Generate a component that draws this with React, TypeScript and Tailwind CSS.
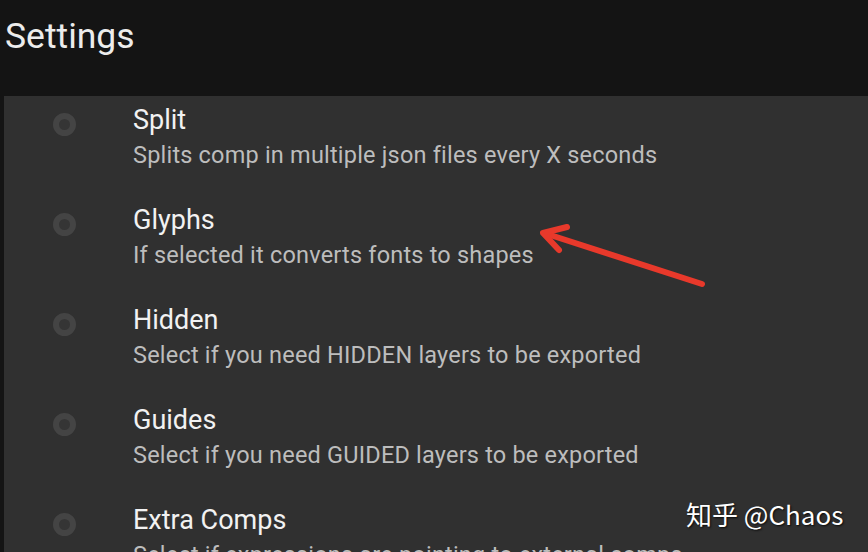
import React from 'react';

type Option = { title: string; description: string };

const options: Option[] = [
  { title: 'Split', description: 'Splits comp in multiple json files every X seconds' },
  { title: 'Glyphs', description: 'If selected it converts fonts to shapes' },
  { title: 'Hidden', description: 'Select if you need HIDDEN layers to be exported' },
  { title: 'Guides', description: 'Select if you need GUIDED layers to be exported' },
  { title: 'Extra Comps', description: 'Select if expressions are pointing to external comps' },
];

const Radio: React.FC = () => (
  <div className="w-[23px] h-[23px] rounded-full border-[6px] border-[#444444] bg-[#353535]" />
);

export default function App() {
  return (
    <div
      className="relative w-[868px] h-[552px] overflow-hidden bg-[#141414] text-white"
      style={{ fontFamily: 'Roboto, "Noto Sans CJK SC", sans-serif' }}
    >
      {/* Header */}
      <div className="h-[96px] pl-[5px] pt-[13px]">
        <h1 className="text-[35.5px] leading-[46px] text-[#ececec]">Settings</h1>
      </div>

      {/* Options panel */}
      <div className="ml-[4px] h-[456px] bg-[#303030]">
        {options.map((o) => (
          <div key={o.title} className="flex h-[100px]">
            <div className="w-[129px] pl-[49px] pt-[17px]">
              <Radio />
            </div>
            <div className="pt-[6px]">
              <div className="text-[27px] leading-[36px] text-[#f2f2f2]">{o.title}</div>
              <div className="text-[23.5px] leading-[34px] text-[#bdbdbd] tracking-[0.2px]">{o.description}</div>
            </div>
          </div>
        ))}
      </div>

      {/* Red annotation arrow */}
      <svg className="absolute left-0 top-0" width="868" height="552" viewBox="0 0 868 552">
        <g stroke="#e8392b" strokeWidth="6" strokeLinecap="round" strokeLinejoin="round" fill="none">
          <path d="M702 284 L544 233" />
          <path d="M567 227 L543 233 L559 250" />
        </g>
      </svg>

      {/* Watermark */}
      <div
        className="absolute left-[686px] top-[496px] text-[26px] leading-[36px] text-white [text-shadow:1px_1px_2px_rgba(0,0,0,0.8)]"
        style={{ fontFamily: '"Noto Sans CJK SC", sans-serif' }}
      >
        知乎 @Chaos
      </div>
    </div>
  );
}
